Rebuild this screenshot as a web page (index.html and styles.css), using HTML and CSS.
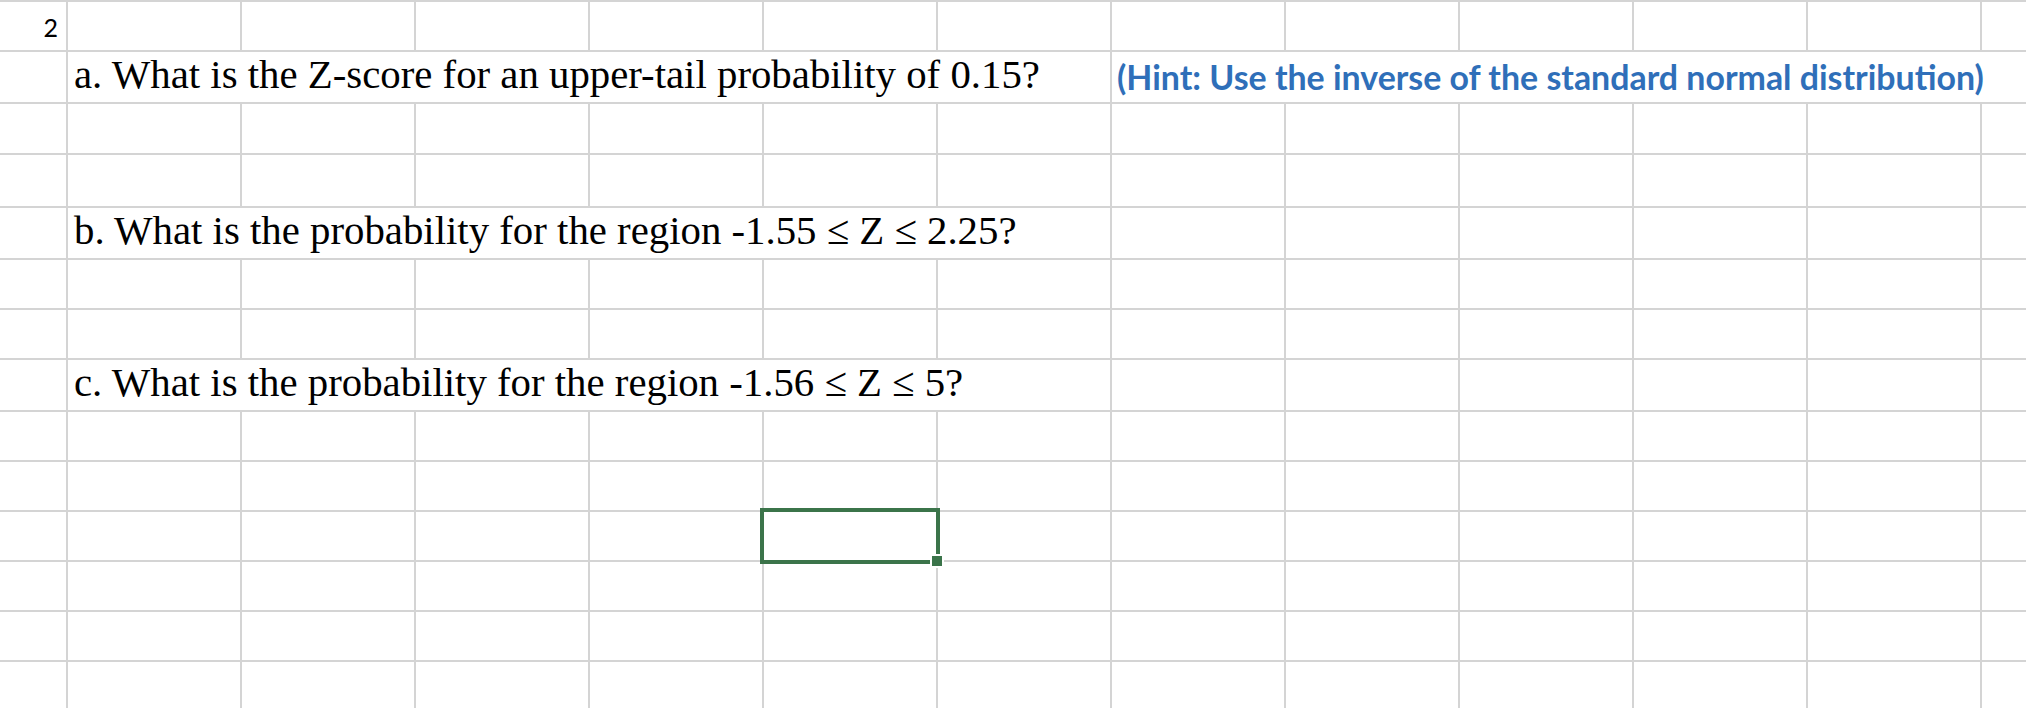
FILE: index.html
```html
<!DOCTYPE html>
<html>
<head>
<meta charset="utf-8">
<link rel="stylesheet" href="styles.css">
<title>Sheet</title>
</head>
<body>
<div class="sheet">
  <div class="row r-first"><div class="hdr">2</div><div class="c"></div><div class="c"></div><div class="c"></div><div class="c"></div><div class="c"></div><div class="c"></div><div class="c"></div><div class="c"></div><div class="c"></div><div class="c"></div><div class="c"></div><div class="c"></div></div>
  <div class="row h52"><div class="hdr"></div><div class="c q span6">a. What is the Z-score for an upper-tail probability of 0.15?</div><div class="c hint span6">(Hint: Use the inverse of the standard normal distribution)</div></div>
  <div class="row h51"><div class="hdr"></div><div class="c"></div><div class="c"></div><div class="c"></div><div class="c"></div><div class="c"></div><div class="c"></div><div class="c"></div><div class="c"></div><div class="c"></div><div class="c"></div><div class="c"></div><div class="c"></div></div>
  <div class="row h53"><div class="hdr"></div><div class="c"></div><div class="c"></div><div class="c"></div><div class="c"></div><div class="c"></div><div class="c"></div><div class="c"></div><div class="c"></div><div class="c"></div><div class="c"></div><div class="c"></div><div class="c"></div></div>
  <div class="row h52"><div class="hdr"></div><div class="c q span6">b. What is the probability for the region -1.55 ≤ Z ≤ 2.25?</div><div class="c"></div><div class="c"></div><div class="c"></div><div class="c"></div><div class="c"></div><div class="c"></div></div>
  <div class="row h50"><div class="hdr"></div><div class="c"></div><div class="c"></div><div class="c"></div><div class="c"></div><div class="c"></div><div class="c"></div><div class="c"></div><div class="c"></div><div class="c"></div><div class="c"></div><div class="c"></div><div class="c"></div></div>
  <div class="row h50"><div class="hdr"></div><div class="c"></div><div class="c"></div><div class="c"></div><div class="c"></div><div class="c"></div><div class="c"></div><div class="c"></div><div class="c"></div><div class="c"></div><div class="c"></div><div class="c"></div><div class="c"></div></div>
  <div class="row h52"><div class="hdr"></div><div class="c q span6">c. What is the probability for the region -1.56 ≤ Z ≤ 5?</div><div class="c"></div><div class="c"></div><div class="c"></div><div class="c"></div><div class="c"></div><div class="c"></div></div>
  <div class="row h50"><div class="hdr"></div><div class="c"></div><div class="c"></div><div class="c"></div><div class="c"></div><div class="c"></div><div class="c"></div><div class="c"></div><div class="c"></div><div class="c"></div><div class="c"></div><div class="c"></div><div class="c"></div></div>
  <div class="row h50"><div class="hdr"></div><div class="c"></div><div class="c"></div><div class="c"></div><div class="c"></div><div class="c"></div><div class="c"></div><div class="c"></div><div class="c"></div><div class="c"></div><div class="c"></div><div class="c"></div><div class="c"></div></div>
  <div class="row h50"><div class="hdr"></div><div class="c"></div><div class="c"></div><div class="c"></div><div class="c"></div><div class="c selected"><span class="sel-box"></span><span class="sel-handle"></span></div><div class="c"></div><div class="c"></div><div class="c"></div><div class="c"></div><div class="c"></div><div class="c"></div><div class="c"></div></div>
  <div class="row h50"><div class="hdr"></div><div class="c"></div><div class="c"></div><div class="c"></div><div class="c"></div><div class="c"></div><div class="c"></div><div class="c"></div><div class="c"></div><div class="c"></div><div class="c"></div><div class="c"></div><div class="c"></div></div>
  <div class="row h50"><div class="hdr"></div><div class="c"></div><div class="c"></div><div class="c"></div><div class="c"></div><div class="c"></div><div class="c"></div><div class="c"></div><div class="c"></div><div class="c"></div><div class="c"></div><div class="c"></div><div class="c"></div></div>
  <div class="row h50"><div class="hdr"></div><div class="c"></div><div class="c"></div><div class="c"></div><div class="c"></div><div class="c"></div><div class="c"></div><div class="c"></div><div class="c"></div><div class="c"></div><div class="c"></div><div class="c"></div><div class="c"></div></div>
</div>
</body>
</html>
```
FILE: styles.css
```css
html, body {
  margin: 0;
  padding: 0;
  background: #ffffff;
  overflow: hidden;
}

.sheet {
  width: 2026px;
  height: 708px;
  overflow: hidden;
}

.row {
  display: grid;
  grid-template-columns: 68px repeat(12, 174px);
  box-sizing: border-box;
}

.r-first { height: 52px; border-top: 2px solid #d4d4d4; }
.h50 { height: 50px; }
.h51 { height: 51px; }
.h52 { height: 52px; }
.h53 { height: 53px; }

.hdr, .c {
  box-sizing: border-box;
  border-right: 2px solid #d4d4d4;
  border-bottom: 2px solid #d4d4d4;
  min-width: 0;
}

.hdr {
  font-family: Lato, "Open Sans", sans-serif;
  font-size: 25px;
  color: #000;
  text-align: right;
  padding: 10px 8px 0 0;
  line-height: 30px;
}

.span6 { grid-column: span 6; }

.q {
  font-family: "Liberation Serif", "Times New Roman", serif;
  font-size: 40.8px;
  line-height: 46px;
  color: #000;
  padding-left: 6px;
  white-space: nowrap;
}

.hint {
  font-family: Lato, "Open Sans", sans-serif;
  font-weight: 700;
  font-size: 33.9px;
  line-height: 50px;
  color: #2f6fb9;
  padding-left: 5px;
  white-space: nowrap;
  border-right: none;
}

.selected { position: relative; }

.sel-box {
  position: absolute;
  left: -4px;
  top: -4px;
  width: 180px;
  height: 56px;
  box-sizing: border-box;
  border: 4px solid #3b744a;
}

.sel-handle {
  position: absolute;
  left: 166px;
  top: 42px;
  width: 10px;
  height: 10px;
  background: #3b744a;
  border: 2px solid #ffffff;
}
```
